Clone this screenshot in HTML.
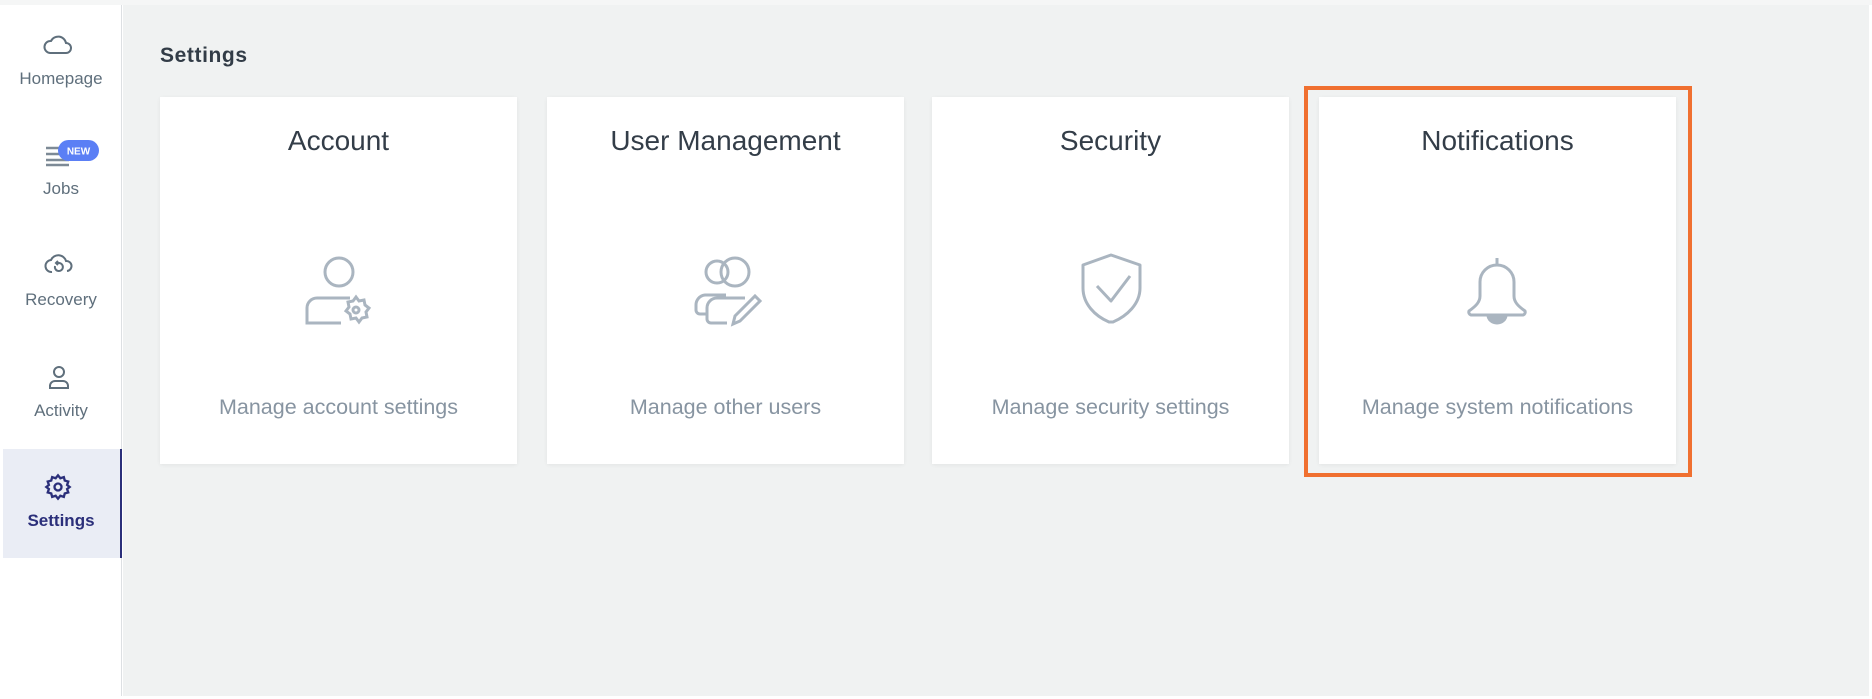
<!DOCTYPE html>
<html><head><meta charset="utf-8"><style>
*{margin:0;padding:0;box-sizing:border-box}
body{width:1872px;height:699px;background:#fff;font-family:"Liberation Sans",sans-serif;position:relative;overflow:hidden}
.main{position:absolute;left:123px;top:5px;width:1746px;height:691px;background:#f0f2f2}
.side{position:absolute;left:0;top:5px;width:122px;height:691px;background:#fff;border-right:1px solid #dde0e3}
.topbar{position:absolute;left:0;top:0;width:1872px;height:5px;background:#f5f6f6}
.nav{position:absolute;left:0;width:122px;text-align:center;font-size:17px;color:#5f6f7c}
.active{position:absolute;left:3px;top:449px;width:119px;height:109px;background:#eaedf5;border-right:2px solid #2b2f7a}
h1{position:absolute;left:160px;top:44px;font-size:21px;font-weight:bold;color:#323c47;letter-spacing:.6px}
.card{position:absolute;top:97px;width:357px;height:367px;background:#fff;box-shadow:0 1px 4px rgba(0,0,0,.06)}
.card .t{position:absolute;top:28px;left:0;right:0;text-align:center;font-size:28px;color:#333d48}
.card .d{position:absolute;top:298px;left:0;right:0;text-align:center;font-size:21.5px;color:#8794a1}
.card svg{position:absolute;left:138px;top:153px}
.hl{position:absolute;left:1304px;top:86px;width:388px;height:391px;border:4px solid #f07030}
</style></head><body>
<div class="topbar"></div>
<div class="side"></div>
<div class="main"></div>
<div class="active"></div>
<svg style="position:absolute;left:42px;top:32px" width="32" height="24" viewBox="0 0 32 24" fill="none" stroke="#5f6f7c" stroke-width="2"><path d="M8 21h16a5 5 0 0 0 0-10a8 8 0 0 0-15-2a6 6 0 0 0-1 12z"/></svg>
<div class="nav" style="top:69px">Homepage</div>
<svg style="position:absolute;left:45px;top:140px" width="56" height="28" viewBox="0 0 56 28"><g stroke="#7d8a96" stroke-width="2.5"><line x1="1" y1="8" x2="20" y2="8"/><line x1="1" y1="14" x2="22" y2="14"/><line x1="1" y1="20" x2="24" y2="20"/><line x1="1" y1="25" x2="24" y2="25"/></g><rect x="13" y="0" width="41" height="21" rx="10.5" fill="#5b7ff5"/><text x="33.5" y="14.5" text-anchor="middle" font-size="10" font-weight="bold" fill="#fff" font-family="Liberation Sans">NEW</text></svg>
<div class="nav" style="top:179px">Jobs</div>
<svg style="position:absolute;left:44px;top:252px" width="30" height="26" viewBox="0 0 30 26" fill="none" stroke="#5f6f7c" stroke-width="2"><path d="M8 20a6 6 0 0 1-1-12a8 8 0 0 1 15 1a5 5 0 0 1 1 10"/><path d="M11 14a4 4 0 1 0 4-3h-3m2-2l-2 2 2 2"/></svg>
<div class="nav" style="top:290px">Recovery</div>
<svg style="position:absolute;left:46px;top:364px" width="26" height="26" viewBox="0 0 26 26" fill="none" stroke="#5f6f7c" stroke-width="2"><circle cx="13" cy="8" r="5"/><path d="M4 24v-2a5 5 0 0 1 5-5h8a5 5 0 0 1 5 5v2z"/></svg>
<div class="nav" style="top:401px">Activity</div>
<svg style="position:absolute;left:44px;top:473px" width="28" height="28" viewBox="0 0 24 24" fill="none" stroke="#2b2f7a" stroke-width="2"><circle cx="12" cy="12" r="3"/><path d="M12 2l2 2.5 3-1 .8 3 3 .8-1 3L22 12l-2.2 1.7 1 3-3 .8-.8 3-3-1L12 22l-2-2.5-3 1-.8-3-3-.8 1-3L2 12l2.2-1.7-1-3 3-.8.8-3 3 1z"/></svg>
<div class="nav" style="top:511px;color:#2b2f7a;font-weight:600">Settings</div>
<h1>Settings</h1>
<div class="card" style="left:160px"><div class="t">Account</div>
<svg width="80" height="80" viewBox="0 0 80 80" fill="none" stroke="#aab5c0" stroke-width="3"><circle cx="41" cy="22" r="14"/><path d="M52 48H19a10 10 0 0 0-10 10v15h34"/><circle cx="58" cy="60" r="3"/><path d="M58 47l3 4 5-1 1 5 4 3-3 4 1 5-5 1-3 4-3-4-5 1-1-5-4-3 3-4-1-5 5-1 3-4z"/></svg>
<div class="d">Manage account settings</div></div>
<div class="card" style="left:547px"><div class="t">User Management</div>
<svg width="80" height="80" viewBox="0 0 80 80" fill="none" stroke="#aab5c0" stroke-width="3"><circle cx="32" cy="22" r="11"/><circle cx="50" cy="22" r="14"/><path d="M41 45H20a10 10 0 0 0-9 10v5a4 4 0 0 0 4 4h6"/><path d="M60 48H32a10 10 0 0 0-10 10v11a4 4 0 0 0 4 4h16"/><path d="M48 74l2-8 20-20 5 5-20 20z"/></svg>
<div class="d">Manage other users</div></div>
<div class="card" style="left:932px"><div class="t">Security</div>
<svg width="80" height="80" viewBox="0 0 80 80" fill="none" stroke="#aab5c0" stroke-width="3" stroke-linejoin="round"><path d="M41 5L13 15v23c0 16 12 28 26 34h4c14-6 27-18 27-34V15z"/><path d="M27 36l14 15 19-25"/></svg>
<div class="d">Manage security settings</div></div>
<div class="card" style="left:1319px"><div class="t">Notifications</div>
<svg width="80" height="80" viewBox="0 0 80 80" fill="none" stroke="#aab5c0" stroke-width="3"><path d="M40 15a17 17 0 0 0-17 17v14c0 6-4 10-11 15a3 3 0 0 0 2 4h52a3 3 0 0 0 2-4c-7-5-11-9-11-15V32a17 17 0 0 0-17-17z"/><path d="M40 8v7"/><path d="M31 65a9 8 0 0 0 18 0z" fill="#aab5c0"/></svg>
<div class="d">Manage system notifications</div></div>
<div class="hl"></div>
</body></html>
